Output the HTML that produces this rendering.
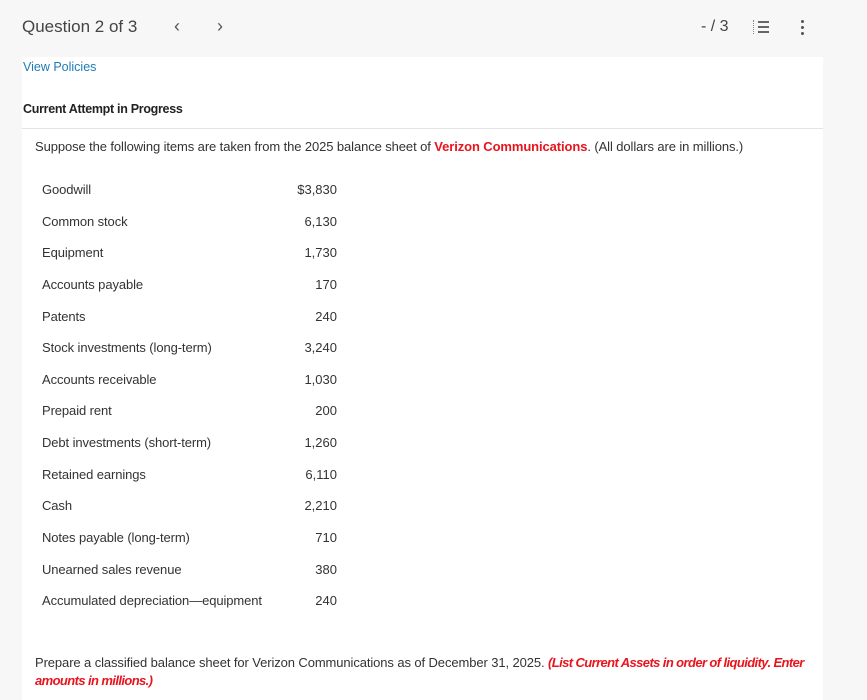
<!DOCTYPE html>
<html><head><meta charset="utf-8"><style>
html,body{margin:0;padding:0;}
body{width:867px;height:700px;background:#f7f7f7;font-family:"Liberation Sans",sans-serif;color:#333;position:relative;overflow:hidden;}
.abs{position:absolute;white-space:nowrap;}
.panel{position:absolute;left:22px;top:57px;width:801px;height:643px;background:#fff;}
.hdr{left:22px;top:17px;font-size:17px;color:#444;}
.nav{font-size:18px;color:#555;top:16px;}
.link{left:23px;top:60px;font-size:12.5px;color:#1f7bb6;}
.cap{left:23px;top:102px;font-size:12.5px;font-weight:bold;color:#222;letter-spacing:-0.3px;}
.rule{position:absolute;left:22px;top:128px;width:801px;height:1px;background:#e4e4e4;}
.t{font-size:13px;color:#333;letter-spacing:-0.1px;}
.lbl{left:42px;font-size:13px;color:#333;letter-spacing:-0.1px;}
.num{right:530px;font-size:13px;color:#333;text-align:right;}
.red{color:#e8141e;}
i.red{letter-spacing:-0.6px;}
</style></head><body>
<div class="panel"></div>
<div class="abs hdr">Question 2 of 3</div>
<div class="abs nav" style="left:174px;">&lsaquo;</div>
<div class="abs nav" style="left:217px;">&rsaquo;</div>
<div class="abs" style="left:701px;top:18px;font-size:16px;color:#444;">- / 3</div>
<div class="abs" style="left:753px;top:20px;width:18px;">
 <div style="position:absolute;left:5px;top:1px;width:11px;height:2px;background:#666"></div>
 <div style="position:absolute;left:5px;top:6px;width:11px;height:2px;background:#666"></div>
 <div style="position:absolute;left:5px;top:11px;width:11px;height:2px;background:#666"></div>
 <div style="position:absolute;left:0;top:0;width:2px;height:14px;border-left:1px dotted #888"></div>
</div>
<div class="abs" style="left:801px;top:20px;">
 <div style="width:3px;height:3px;background:#555;border-radius:2px;margin-bottom:3px"></div>
 <div style="width:3px;height:3px;background:#555;border-radius:2px;margin-bottom:3px"></div>
 <div style="width:3px;height:3px;background:#555;border-radius:2px"></div>
</div>
<div class="abs link">View Policies</div>
<div class="abs cap">Current Attempt in Progress</div>
<div class="rule"></div>
<div class="abs t" style="left:35px;top:139px;">Suppose the following items are taken from the 2025 balance sheet of <span class="red" style="font-weight:bold">Verizon Communications</span>. (All dollars are in millions.)</div>

<div class="abs lbl" style="top:182px">Goodwill</div><div class="abs num" style="top:182px">$3,830</div>
<div class="abs lbl" style="top:214px">Common stock</div><div class="abs num" style="top:214px">6,130</div>
<div class="abs lbl" style="top:245px">Equipment</div><div class="abs num" style="top:245px">1,730</div>
<div class="abs lbl" style="top:277px">Accounts payable</div><div class="abs num" style="top:277px">170</div>
<div class="abs lbl" style="top:309px">Patents</div><div class="abs num" style="top:309px">240</div>
<div class="abs lbl" style="top:340px">Stock investments (long-term)</div><div class="abs num" style="top:340px">3,240</div>
<div class="abs lbl" style="top:372px">Accounts receivable</div><div class="abs num" style="top:372px">1,030</div>
<div class="abs lbl" style="top:403px">Prepaid rent</div><div class="abs num" style="top:403px">200</div>
<div class="abs lbl" style="top:435px">Debt investments (short-term)</div><div class="abs num" style="top:435px">1,260</div>
<div class="abs lbl" style="top:467px">Retained earnings</div><div class="abs num" style="top:467px">6,110</div>
<div class="abs lbl" style="top:498px">Cash</div><div class="abs num" style="top:498px">2,210</div>
<div class="abs lbl" style="top:530px">Notes payable (long-term)</div><div class="abs num" style="top:530px">710</div>
<div class="abs lbl" style="top:562px">Unearned sales revenue</div><div class="abs num" style="top:562px">380</div>
<div class="abs lbl" style="top:593px">Accumulated depreciation—equipment</div><div class="abs num" style="top:593px">240</div>

<div class="abs t" style="left:35px;top:655px;">Prepare a classified balance sheet for Verizon Communications as of December 31, 2025. <i class="red" style="font-weight:bold">(List Current Assets in order of liquidity. Enter</i></div>
<div class="abs t" style="left:35px;top:673px;"><i class="red" style="font-weight:bold">amounts in millions.)</i></div>
</body></html>
